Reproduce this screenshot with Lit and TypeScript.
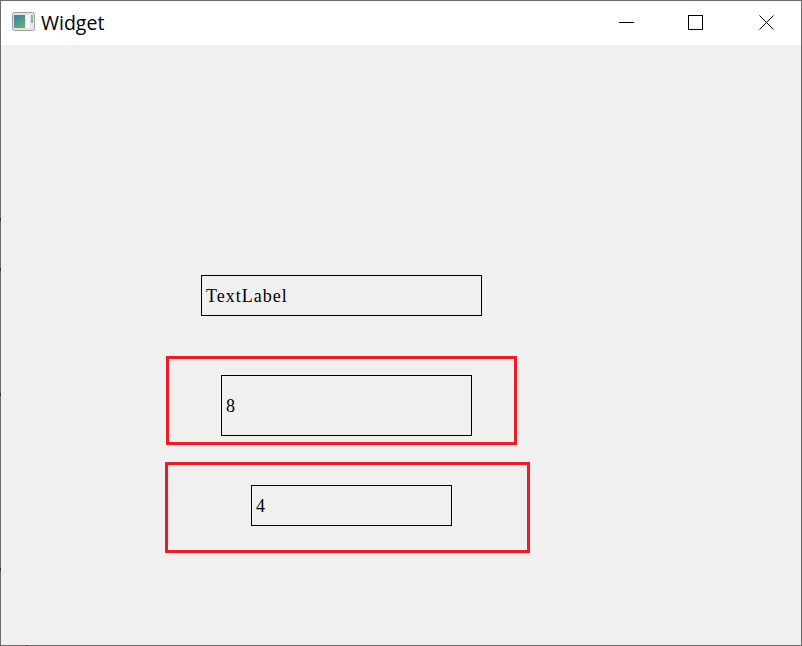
import { LitElement, html, css } from "lit";
import { customElement } from "lit/decorators.js";

const TICKS = [
  { x: -1, y: 217, w: 1, h: 3 },
  { x: -1, y: 267, w: 1, h: 3 },
  { x: -1, y: 392, w: 1, h: 3 },
  { x: -1, y: 567, w: 1, h: 3 },
];

@customElement("app-root")
export class AppRoot extends LitElement {
  static styles = css`
    :host { display: block; width: 802px; height: 646px; }
    .window {
      box-sizing: border-box; width: 802px; height: 646px; position: relative;
      border: 1px solid #6b6b6b; background: #f0f0f0;
      display: flex; flex-direction: column;
      font-family: "Liberation Serif", serif; color: #000;
    }
    .tick { position: absolute; background: #333; }
    .foot { position: absolute; left: 25px; bottom: -1px; width: 2px; height: 1px; background: #5a4630; }
    .titlebar {
      height: 44px; flex: none; background: #fff;
      display: flex; align-items: center;
    }
    .app-icon { margin: 0 0 3px 11px; flex: none; display: block; }
    .title {
      margin: 0 0 2px 6px; flex: 1;
      font: 19.5px "Open Sans", "Liberation Sans", sans-serif; color: #000;
    }
    .controls { display: flex; align-items: center; gap: 54px; margin: 0 27px 1px 0; }
    .control { display: block; flex: none; }
    .close { margin-left: 2px; }
    .body {
      flex: 1; padding-top: 230px;
      display: flex; flex-direction: column; align-items: flex-start;
    }
    .label {
      box-sizing: border-box; border: 1px solid #000;
      display: flex; align-items: center; padding: 1px 0 0 4px;
      font-size: 18px; line-height: 20px; letter-spacing: 1px; color: #000;
    }
    .top { width: 281px; height: 41px; margin-left: 200px; }
    .frame { box-sizing: border-box; border: 3px solid #ed1c24; display: flex; align-items: flex-start; }
    .frame-a { width: 351px; height: 89px; margin: 40px 0 0 165px; padding: 16px 0 0 52px; }
    .frame-b { width: 365px; height: 91px; margin: 17px 0 0 164px; padding: 20px 0 0 83px; }
    .wide { width: 251px; height: 61px; }
    .narrow { width: 201px; height: 41px; }
  `;

  render() {
    return html`
      <div class="window">
        <div class="titlebar">
          <svg class="app-icon" width="23" height="19" viewBox="0 0 23 19">
            <defs>
              <linearGradient id="g" x1="0" y1="0" x2="0.5" y2="1">
                <stop offset="0" stop-color="#3d7fa6" />
                <stop offset="1" stop-color="#63a878" />
              </linearGradient>
            </defs>
            <rect x="0.5" y="0.5" width="22" height="18" rx="2" fill="#e3e6e8" stroke="#9a9fa3" />
            <rect x="2" y="3" width="11" height="13" fill="url(#g)" />
            <rect x="14" y="3" width="4" height="13" fill="#f6f8f8" />
            <rect x="19" y="3" width="2" height="8" fill="#8fb09a" />
          </svg>
          <span class="title">Widget</span>
          <div class="controls">
            <svg class="control" width="15" height="15" viewBox="0 0 15 15"><path d="M0 7.5H15" stroke="#000" fill="none" /></svg>
            <svg class="control" width="15" height="15" viewBox="0 0 15 15"><rect x="0.5" y="0.5" width="14" height="14" stroke="#000" fill="none" /></svg>
            <svg class="control close" width="15" height="15" viewBox="0 0 15 15"><path d="M0.5 0.5L14.5 14.5M14.5 0.5L0.5 14.5" stroke="#000" fill="none" /></svg>
          </div>
        </div>
        <div class="body">
          <div class="label top">TextLabel</div>
          <div class="frame frame-a"><div class="label wide">8</div></div>
          <div class="frame frame-b"><div class="label narrow">4</div></div>
        </div>
        ${TICKS.map(
          (t) => html`<i class="tick" style="left:${t.x}px;top:${t.y}px;width:${t.w}px;height:${t.h}px"></i>`
        )}
        <i class="foot"></i>
      </div>
    `;
  }
}
